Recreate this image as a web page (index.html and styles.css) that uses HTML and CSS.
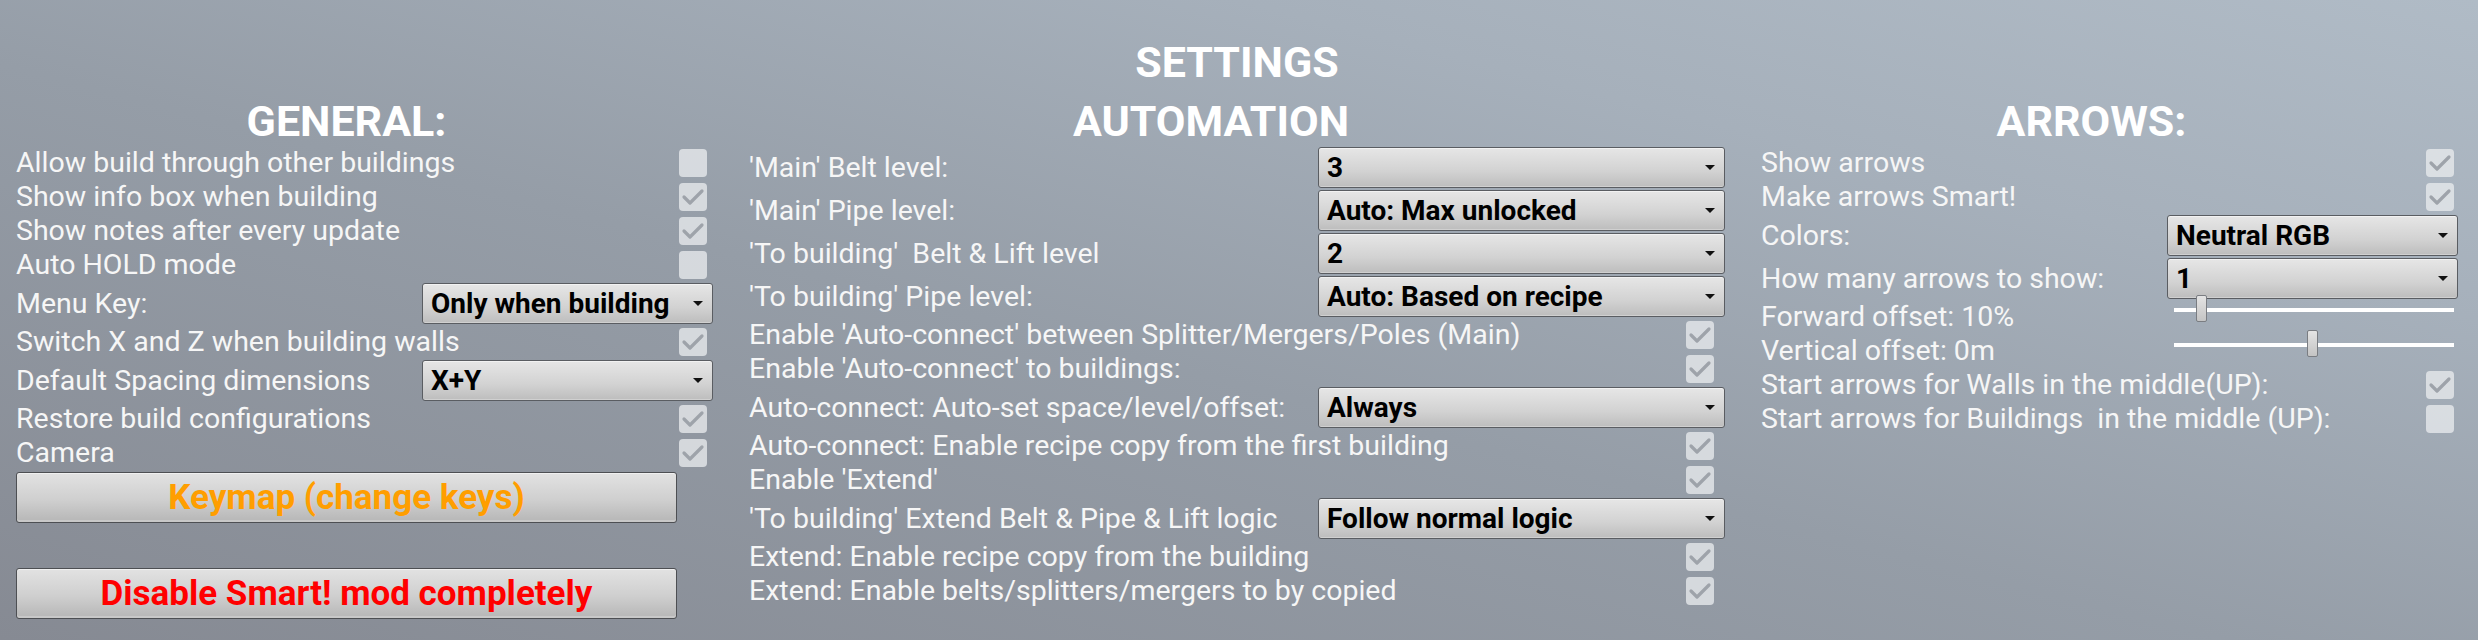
FILE: index.html
```html
<!DOCTYPE html>
<html lang="en">
<head>
    <meta charset="UTF-8">
    <title>Smart! Settings</title>
    <link rel="stylesheet" href="styles.css">
</head>
<body>
    <h1 class="title">SETTINGS</h1>

    <div class="columns">
        <section class="col col-general">
            <h2 class="col-title">GENERAL:</h2>
            <div class="row"><span>Allow build through other buildings</span><span class="check"></span></div>
            <div class="row"><span>Show info box when building</span><span class="check"><svg viewBox="0 0 28 28"><path d="M5 14l6 6 12-12"/></svg></span></div>
            <div class="row"><span>Show notes after every update</span><span class="check"><svg viewBox="0 0 28 28"><path d="M5 14l6 6 12-12"/></svg></span></div>
            <div class="row"><span>Auto HOLD mode</span><span class="check"></span></div>
            <div class="row row-select"><span>Menu Key:</span><div class="dropdown">Only when building</div></div>
            <div class="row"><span>Switch X and Z when building walls</span><span class="check"><svg viewBox="0 0 28 28"><path d="M5 14l6 6 12-12"/></svg></span></div>
            <div class="row row-select"><span>Default Spacing dimensions</span><div class="dropdown">X+Y</div></div>
            <div class="row"><span>Restore build configurations</span><span class="check"><svg viewBox="0 0 28 28"><path d="M5 14l6 6 12-12"/></svg></span></div>
            <div class="row"><span>Camera</span><span class="check"><svg viewBox="0 0 28 28"><path d="M5 14l6 6 12-12"/></svg></span></div>
            <button class="btn btn-orange">Keymap (change keys)</button>
            <button class="btn btn-red">Disable Smart! mod completely</button>
        </section>

        <section class="col col-auto">
            <h2 class="col-title">AUTOMATION</h2>
            <div class="row row-select"><span>'Main' Belt level:</span><div class="dropdown">3</div></div>
            <div class="row row-select"><span>'Main' Pipe level:</span><div class="dropdown">Auto: Max unlocked</div></div>
            <div class="row row-select"><span>'To building'&nbsp; Belt &amp; Lift level</span><div class="dropdown">2</div></div>
            <div class="row row-select"><span>'To building' Pipe level:</span><div class="dropdown">Auto: Based on recipe</div></div>
            <div class="row"><span>Enable 'Auto-connect' between Splitter/Mergers/Poles (Main)</span><span class="check"><svg viewBox="0 0 28 28"><path d="M5 14l6 6 12-12"/></svg></span></div>
            <div class="row"><span>Enable 'Auto-connect' to buildings:</span><span class="check"><svg viewBox="0 0 28 28"><path d="M5 14l6 6 12-12"/></svg></span></div>
            <div class="row row-select"><span>Auto-connect: Auto-set space/level/offset:</span><div class="dropdown">Always</div></div>
            <div class="row"><span>Auto-connect: Enable recipe copy from the first building</span><span class="check"><svg viewBox="0 0 28 28"><path d="M5 14l6 6 12-12"/></svg></span></div>
            <div class="row"><span>Enable 'Extend'</span><span class="check"><svg viewBox="0 0 28 28"><path d="M5 14l6 6 12-12"/></svg></span></div>
            <div class="row row-select"><span>'To building' Extend Belt &amp; Pipe &amp; Lift logic</span><div class="dropdown">Follow normal logic</div></div>
            <div class="row"><span>Extend: Enable recipe copy from the building</span><span class="check"><svg viewBox="0 0 28 28"><path d="M5 14l6 6 12-12"/></svg></span></div>
            <div class="row"><span>Extend: Enable belts/splitters/mergers to by copied</span><span class="check"><svg viewBox="0 0 28 28"><path d="M5 14l6 6 12-12"/></svg></span></div>
        </section>

        <section class="col col-arrows">
            <h2 class="col-title">ARROWS:</h2>
            <div class="row"><span>Show arrows</span><span class="check"><svg viewBox="0 0 28 28"><path d="M5 14l6 6 12-12"/></svg></span></div>
            <div class="row"><span>Make arrows Smart!</span><span class="check"><svg viewBox="0 0 28 28"><path d="M5 14l6 6 12-12"/></svg></span></div>
            <div class="row row-select"><span>Colors:</span><div class="dropdown">Neutral RGB</div></div>
            <div class="row row-select"><span>How many arrows to show:</span><div class="dropdown">1</div></div>
            <div class="row"><span>Forward offset: 10%</span><div class="slider"><span class="thumb" style="left: 7.9%"></span></div></div>
            <div class="row"><span>Vertical offset: 0m</span><div class="slider"><span class="thumb" style="left: 47.5%"></span></div></div>
            <div class="row"><span>Start arrows for Walls in the middle(UP):</span><span class="check"><svg viewBox="0 0 28 28"><path d="M5 14l6 6 12-12"/></svg></span></div>
            <div class="row"><span>Start arrows for Buildings&nbsp; in the middle (UP):</span><span class="check"></span></div>
        </section>
    </div>
</body>
</html>
```

FILE: styles.css
```css
html, body {
    height: 100%;
    margin: 0;
}
body {
    box-sizing: border-box;
    padding: 38px 20px 0 16px;
    font-family: Roboto, "Liberation Sans", sans-serif;
    color: #f6f6f6;
    background: linear-gradient(to top right, #868a93 0%, #959da7 45%, #a6b0bb 75%, #b0bbc6 100%);
    overflow: hidden;
}
.title {
    margin: 0 0 11px;
    font-size: 43px;
    line-height: 48px;
    font-weight: bold;
    text-align: center;
    color: #fff;
}
.columns {
    display: grid;
    grid-template-columns: 697px 976px 697px;
    column-gap: 36px;
}
.col {
    display: flex;
    flex-direction: column;
}
.col-title {
    margin: 0 0 1px;
    padding-right: 36px;
    font-size: 43px;
    line-height: 48px;
    font-weight: bold;
    text-align: center;
    color: #fff;
}
.col-auto .col-title {
    padding-right: 52px;
}
.row {
    display: flex;
    justify-content: space-between;
    align-items: center;
    height: 34px;
    font-size: 28.5px;
    line-height: 34px;
    white-space: nowrap;
}
.row-select {
    height: 43px;
}
.check {
    width: 28px;
    height: 28px;
    margin-right: 6px;
    border-radius: 4px;
    background-color: rgba(232, 234, 237, 0.78);
}
.col-auto .check {
    margin-right: 11px;
}
.col-arrows .check {
    margin-right: 4px;
}
.check svg {
    display: block;
    width: 28px;
    height: 28px;
}
.check path {
    fill: none;
    stroke: #9ea3aa;
    stroke-width: 3.2;
    stroke-linecap: round;
    stroke-linejoin: round;
}
.dropdown {
    position: relative;
    box-sizing: border-box;
    width: 291px;
    height: 41px;
    padding: 0 30px 0 8px;
    font-size: 28px;
    line-height: 39px;
    font-weight: bold;
    color: #000;
    border: 1px solid #5a5d62;
    border-radius: 3px;
    background: linear-gradient(#e6e6e6, #d2d2d2 60%, #bdbdbd);
    box-shadow: inset 0 1px 0 #f2f2f2, inset 0 -1px 0 #d0d0d0;
}
.dropdown::after {
    content: "";
    position: absolute;
    right: 9px;
    top: 17px;
    border-left: 5px solid transparent;
    border-right: 5px solid transparent;
    border-top: 5px solid #111;
}
.col-auto .dropdown {
    width: 407px;
}
.col-arrows .dropdown {
    width: 291px;
}
.slider {
    position: relative;
    width: 280px;
    height: 4px;
    margin-right: 4px;
    margin-top: -14px;
    background-color: #fff;
}
.col-arrows .row:nth-child(7) .slider {
    margin-top: -12px;
}
.thumb {
    position: absolute;
    top: -13px;
    width: 11px;
    height: 27px;
    box-sizing: border-box;
    border: 1px solid #7a7d82;
    border-radius: 2px;
    background: linear-gradient(#e4e4e4, #c4c4c4);
}
.btn {
    box-sizing: border-box;
    width: 661px;
    height: 51px;
    padding: 0;
    font-family: Roboto, "Liberation Sans", sans-serif;
    font-size: 35px;
    font-weight: bold;
    border: 1px solid #4d4f53;
    border-radius: 3px;
    background: linear-gradient(#e2e2e2, #cfcfcf 55%, #b6b6b6);
    box-shadow: inset 0 1px 0 #f0f0f0, inset 0 -2px 0 #c8c8c8;
}
.btn-orange {
    margin-top: 2px;
    color: #ff9e00;
}
.btn-red {
    margin-top: 45px;
    color: #ff0000;
}
```
